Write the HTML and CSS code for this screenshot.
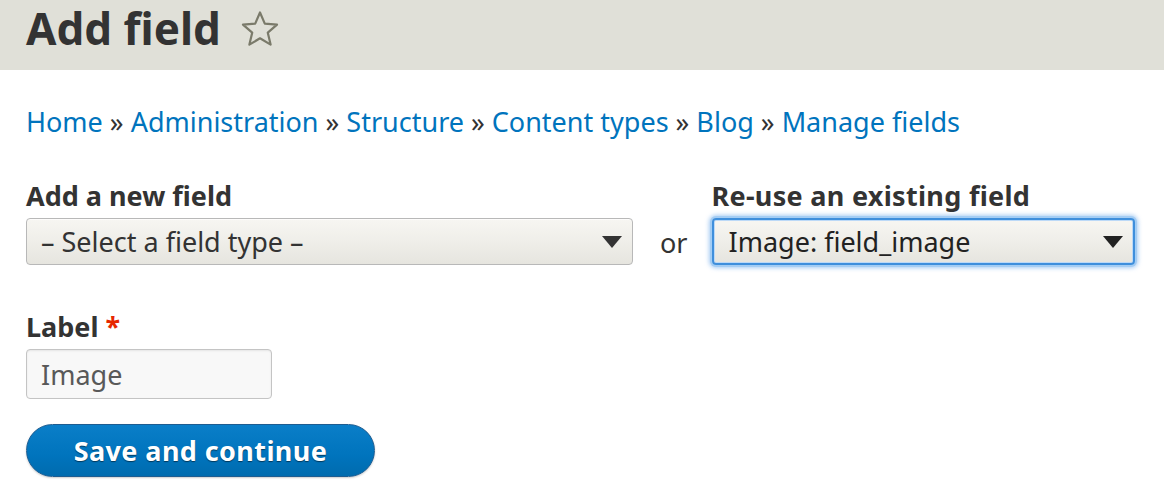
FILE: index.html
```html
<!DOCTYPE html>
<html lang="en">
<head>
<meta charset="utf-8">
<title>Add field</title>
<link rel="stylesheet" href="styles.css">
</head>
<body>
<header class="page-header">
  <h1 class="page-title">Add field</h1>
  <svg class="shortcut-star" width="38" height="38" viewBox="0 0 38 38" aria-hidden="true">
    <path d="M19 1.5 L23.8 12.6 L36 13.6 L26.8 21.7 L29.6 33.6 L19 27.3 L8.4 33.6 L11.2 21.7 L2 13.6 L14.2 12.6 Z" fill="none" stroke="#7a7a6a" stroke-width="2.2" stroke-linejoin="round"/>
  </svg>
</header>
<main class="content">
  <nav class="breadcrumb">
    <a href="#">Home</a><span class="sep"> » </span><a href="#">Administration</a><span class="sep"> » </span><a href="#">Structure</a><span class="sep"> » </span><a href="#">Content types</a><span class="sep"> » </span><a href="#">Blog</a><span class="sep"> » </span><a href="#">Manage fields</a>
  </nav>
  <div class="field-row">
    <div class="form-item new-field">
      <label class="form-label">Add a new field</label>
      <div class="select-wrap">
        <select class="form-select">
          <option>– Select a field type –</option>
        </select>
        <svg class="select-arrow" width="20" height="12" viewBox="0 0 20 12"><path d="M0 0 H20 L10 12 Z" fill="#333"/></svg>
      </div>
    </div>
    <div class="or">or</div>
    <div class="form-item existing-field">
      <label class="form-label">Re-use an existing field</label>
      <div class="select-wrap">
        <select class="form-select focused">
          <option>Image: field_image</option>
        </select>
        <svg class="select-arrow" width="20" height="12" viewBox="0 0 20 12"><path d="M0 0 H20 L10 12 Z" fill="#222"/></svg>
      </div>
    </div>
  </div>
  <div class="form-item label-item">
    <label class="form-label">Label <span class="required">*</span></label>
    <input class="form-text" type="text" value="Image">
  </div>
  <button class="button-primary" type="button">Save and continue</button>
</main>
</body>
</html>
```
FILE: styles.css
```css
* { box-sizing: border-box; }
html, body { margin: 0; padding: 0; }
body {
  font-family: "Noto Sans", "Liberation Sans", sans-serif;
  color: #333;
  background: #fff;
  width: 1164px;
  height: 490px;
  overflow: hidden;
}
.page-header {
  height: 70px;
  background: #e0e0d8;
  padding-left: 26px;
  display: flex;
  align-items: flex-start;
}
.page-title {
  margin: 0;
  font-size: 44px;
  line-height: 57px;
  font-weight: bold;
  color: #333;
}
.shortcut-star {
  margin-left: 20px;
  margin-top: 11px;
}
.content {
  padding: 0 26px;
}
.breadcrumb {
  margin-top: 37px;
  font-size: 27px;
  line-height: 30px;
  color: #333;
  white-space: nowrap;
}
.breadcrumb a {
  color: #0074bd;
  text-decoration: none;
}
.breadcrumb .sep {
  color: #333;
}
.field-row {
  margin-top: 44px;
  display: flex;
  align-items: flex-start;
}
.form-item {
  display: flex;
  flex-direction: column;
}
.form-label {
  font-size: 27px;
  line-height: 30px;
  font-weight: bold;
  color: #333;
  margin-bottom: 7px;
}
.existing-field .form-label { letter-spacing: 0.3px; }
.new-field { width: 607px; }
.existing-field { width: 423px; }
.or {
  font-size: 27px;
  line-height: 30px;
  color: #333;
  margin: 47px 24px 0 27px;
}
.select-wrap {
  position: relative;
}
.form-select {
  -webkit-appearance: none;
  appearance: none;
  width: 100%;
  height: 47px;
  margin: 0;
  padding: 0 44px 0 14px;
  font-family: "Noto Sans", "Liberation Sans", sans-serif;
  font-size: 27px;
  color: #333;
  border: 1px solid #b8b8b8;
  border-radius: 4px;
  background: linear-gradient(to bottom, #f7f6f2 0%, #efeee9 50%, #e6e5df 100%);
  box-shadow: inset 0 1px 0 rgba(255,255,255,0.7);
  outline: none;
}
.form-select.focused {
  color: #222;
  border: 2px solid #3f8fdc;
  box-shadow: 0 0 0 2px #a4cdf4, 0 0 4px 3px rgba(110,170,235,0.6), inset 0 0 0 1px #bcd9f7;
  padding-left: 15px;
}
.select-arrow {
  position: absolute;
  right: 11px;
  top: 18px;
  pointer-events: none;
}
.existing-field .select-arrow { right: 12px; top: 18px; }
.label-item {
  margin-top: 47px;
}
.required {
  color: #e62600;
}
.form-text {
  width: 246px;
  height: 50px;
  margin: 0;
  padding: 0 14px;
  font-family: "Noto Sans", "Liberation Sans", sans-serif;
  font-size: 27px;
  color: #595959;
  background: #f8f8f8;
  border: 1px solid #c4c4c4;
  border-radius: 4px;
  box-shadow: inset 0 1px 2px rgba(0,0,0,0.08);
}
.button-primary {
  display: block;
  margin-top: 25px;
  width: 349px;
  height: 53px;
  padding: 0;
  font-family: "Noto Sans", "Liberation Sans", sans-serif;
  font-size: 27px;
  font-weight: bold;
  letter-spacing: 0.4px;
  color: #fff;
  text-shadow: 0 1px 1px rgba(0,0,0,0.5);
  background: linear-gradient(to bottom, #0a7ec8 0%, #0074bd 60%, #006bae 100%);
  border: 1px solid #1e5c90;
  border-radius: 27px;
  box-shadow: 0 1px 2px rgba(0,0,0,0.2);
}
```
